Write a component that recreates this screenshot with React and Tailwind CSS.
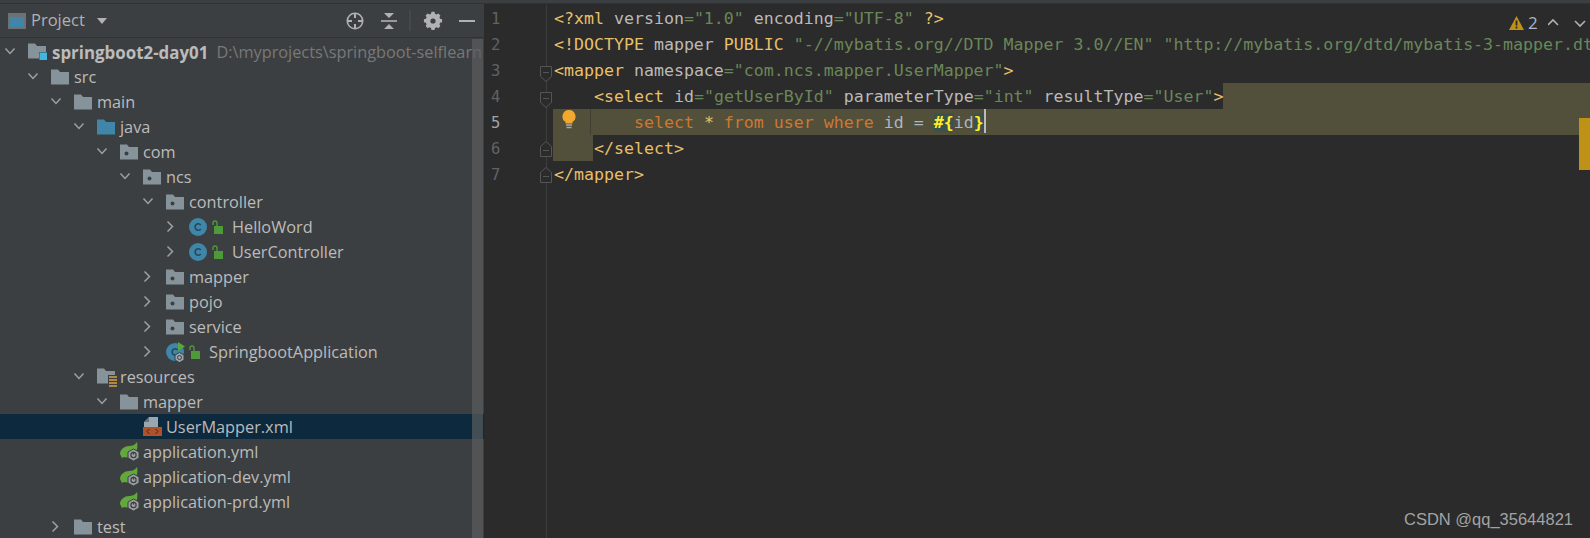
const treeRows = [
  { level: 0, open: true, icon: "module", name: "springboot2-day01", bold: true, path: "D:\\myprojects\\springboot-selflearn" },
  { level: 1, open: true, icon: "folder", name: "src" },
  { level: 2, open: true, icon: "folder", name: "main" },
  { level: 3, open: true, icon: "source", name: "java" },
  { level: 4, open: true, icon: "package", name: "com" },
  { level: 5, open: true, icon: "package", name: "ncs" },
  { level: 6, open: true, icon: "package", name: "controller" },
  { level: 7, open: false, icon: "class", name: "HelloWord" },
  { level: 7, open: false, icon: "class", name: "UserController" },
  { level: 6, open: false, icon: "package", name: "mapper" },
  { level: 6, open: false, icon: "package", name: "pojo" },
  { level: 6, open: false, icon: "package", name: "service" },
  { level: 6, open: false, icon: "boot", name: "SpringbootApplication" },
  { level: 3, open: true, icon: "resources", name: "resources" },
  { level: 4, open: true, icon: "folder", name: "mapper" },
  { level: 5, icon: "xml", name: "UserMapper.xml", selected: true },
  { level: 4, icon: "spring", name: "application.yml" },
  { level: 4, icon: "spring", name: "application-dev.yml" },
  { level: 4, icon: "spring", name: "application-prd.yml" },
  { level: 2, open: false, icon: "folder", name: "test" },
];

const FOLDER = "M0 1.5h7l2 2.5h9v12.5H0z";

const Chevron = ({ open }) => (
  <svg width="20" height="25" viewBox="0 0 20 25" fill="none" stroke="#9da0a2" strokeWidth="1.5" className="shrink-0">
    {open ? <path d="M5.5 9.5l4.500 5 4.500-5" /> : <path d="M6.500 7.500l5 5-5 5" />}
  </svg>
);

const Lock = () => (
  <svg width="11" height="14" viewBox="0 0 11 14" className="shrink-0">
    <path d="M1 5V3a2 2 0 0 1 4 0v3" fill="none" stroke="#4f9a38" strokeWidth="1.4" />
    <rect x="2" y="6" width="9" height="8" fill="#4f9a38" />
  </svg>
);

const TreeIcon = ({ type }) => {
  if (type === "class") {
    return (
      <div className="flex items-center shrink-0">
        <svg width="18" height="18" viewBox="0 0 18 18">
          <circle cx="9" cy="9" r="9" fill="#3f86a8" />
          <path d="M11.800 7a3.200 3.200 0 1 0 0 4" fill="none" stroke="#24495c" strokeWidth="1.6" />
        </svg>
        <div className="ml-[5px] mr-[4px]"><Lock /></div>
      </div>
    );
  }
  if (type === "boot") {
    return (
      <div className="flex items-center shrink-0">
        <svg width="20" height="22" viewBox="0 0 20 22">
          <circle cx="9" cy="11" r="9" fill="#3f86a8" />
          <path d="M11.800 9a3.200 3.200 0 1 0 0 4" fill="none" stroke="#24495c" strokeWidth="1.6" />
          <path d="M12 1l7 4.500-7 4.500z" fill="#59a83b" />
          <path d="M13.500 11.500l4.500 2.500v5l-4.500 2.500-4.500-2.500v-5z" fill="#9aa7b0" stroke="#3c3f41" />
          <circle cx="13.500" cy="16.500" r="2" fill="none" stroke="#3c3f41" />
        </svg>
        <div className="ml-[3px] mr-[4px]"><Lock /></div>
      </div>
    );
  }
  if (type === "xml") {
    return (
      <svg width="19" height="20" viewBox="0 0 19 20" className="shrink-0 mr-[-1px]">
        <path d="M6 0h9v10H1V5z" fill="#9aa7b0" />
        <path d="M6 0v5H1z" fill="#3c3f41" opacity="0.5" />
        <rect y="10" width="19" height="9" fill="#b0512a" />
        <path d="M6.500 12l-2.500 2.500 2.500 2.500M12.500 12l2.500 2.500-2.500 2.500" fill="none" stroke="#2a2b2c" strokeWidth="1" />
      </svg>
    );
  }
  if (type === "spring") {
    return (
      <svg width="20" height="20" viewBox="0 0 20 20" className="shrink-0 mr-[-2px]">
        <path d="M0 12c0-5 5-8 9-8 3 0 6-1 8-4 1 5 0 10-3 13-3 2-7 3-10 2L2 16z" fill="#62a83d" />
        <path d="M13.500 7l5.500 3v6l-5.500 3L8 16v-6z" fill="#9da0a2" stroke="#3c3f41" />
        <circle cx="13.500" cy="13" r="2.600" fill="none" stroke="#3c3f41" strokeWidth="1.2" />
        <path d="M13.500 9.600v3" stroke="#3c3f41" strokeWidth="1.2" />
      </svg>
    );
  }
  if (type === "module") {
    return (
      <svg width="19" height="20" viewBox="0 0 19 20" className="shrink-0">
        <path d={FOLDER} fill="#87939a" />
        <rect x="11" y="10" width="8" height="8" fill="#3c3f41" />
        <rect x="11.500" y="10.500" width="7.500" height="7.500" fill="#40b6e0" />
      </svg>
    );
  }
  if (type === "resources") {
    return (
      <svg width="20" height="20" viewBox="0 0 20 20" className="shrink-0 mr-[-2px]">
        <path d={FOLDER} fill="#87939a" />
        <rect x="11" y="8" width="9" height="12" fill="#3c3f41" />
        <path d="M12 10h8M12 13h8M12 16h8M12 19h8" stroke="#d9a343" strokeWidth="1.4" />
      </svg>
    );
  }
  return (
    <svg width="18" height="18" viewBox="0 0 18 18" className="shrink-0">
      <path d={FOLDER} fill={type === "source" ? "#3f86a8" : "#87939a"} />
      {type === "package" && <circle cx="6.500" cy="10.500" r="2" fill="#3c3f41" />}
    </svg>
  );
};

const TreeRow = ({ row }) => (
  <div
    className={`flex items-center h-[25px] whitespace-nowrap ${row.selected ? "bg-[#0d293e]" : ""}`}
    style={{ paddingLeft: row.level * 23 }}
  >
    {row.open === undefined ? <div className="w-[20px] shrink-0" /> : <Chevron open={row.open} />}
    <div className="w-[8px] shrink-0" />
    <TreeIcon type={row.icon} />
    <span className={`ml-[5px] pt-[2px] text-[#bbbbbb] ${row.bold ? "font-bold text-[16.900px]" : "text-[16.300px]"}`}>{row.name}</span>
    {row.path && <span className="ml-[8px] pt-[2px] text-[16.300px] text-[#787878]">{row.path}</span>}
  </div>
);

const HeaderIcons = () => (
  <svg width="140" height="33" viewBox="0 0 140 33" className="shrink-0">
    <g fill="none" stroke="#afb1b3">
      <circle cx="17" cy="17" r="7.700" strokeWidth="1.6" />
      <path d="M17 9v5M17 20v5M9 17h5M20 17h5" strokeWidth="2" />
      <path d="M43 17h16" strokeWidth="1.6" />
    </g>
    <path d="M46 9h10l-5 5zM46 25h10l-5-5z" fill="#afb1b3" />
    <path d="M72 6v21" stroke="#515151" />
    <path
      d="M93.500 9.200h3l.5 2 1.500.7 1.800-1 2.100 2.100-1 1.800.7 1.500 2 .5v3l-2 .5-.7 1.500 1 1.800-2.100 2.100-1.800-1-1.500.7-.5 2h-3l-.5-2-1.500-.7-1.800 1-2.100-2.100 1-1.800-.7-1.500-2-.5v-3l2-.5.7-1.500-1-1.800 2.100-2.100 1.800 1 1.500-.7z"
      fill="#afb1b3"
      transform="translate(0 -1.500)"
    />
    <circle cx="95" cy="17" r="2.600" fill="#3c3f41" />
    <path d="M121 17h16" stroke="#afb1b3" strokeWidth="2" />
  </svg>
);

const ProjectPanel = () => (
  <div className="relative w-[484px] h-full shrink-0 bg-[#3c3f41] overflow-hidden font-['Open_Sans',sans-serif]">
    <div className="flex items-center h-[34px] border-b border-[#323232] pl-[8px] pr-[6px]">
      <svg width="18" height="16" viewBox="0 0 18 16" className="shrink-0">
        <rect width="18" height="16" fill="#6e7072" />
        <rect x="2" y="4" width="14" height="10" fill="#3f86a8" />
      </svg>
      <span className="ml-[5px] text-[16.500px] text-[#afb1b3]">Project</span>
      <svg width="10" height="6" viewBox="0 0 10 6" className="ml-[12px] shrink-0">
        <path d="M0 0h10l-5 6z" fill="#afb1b3" />
      </svg>
      <div className="flex-1" />
      <HeaderIcons />
    </div>
    <div className="pt-px">
      {treeRows.map((row, i) => (
        <TreeRow key={i} row={row} />
      ))}
    </div>
    <div className="absolute left-[472px] top-[35px] bottom-0 w-[11px] bg-[#5a5c5e]/70" />
  </div>
);

const T = ({ c, children }) => <span className={c}>{children}</span>;

const tag = "text-[#e8bf6a]";
const attr = "text-[#bababa]";
const str = "text-[#6a8759]";
const kw = "text-[#cc7832]";

const lines = [
  <>
    <T c={tag}>&lt;?xml </T><T c={attr}>version</T><T c={str}>="1.0" </T><T c={attr}>encoding</T><T c={str}>="UTF-8" </T><T c={tag}>?&gt;</T>
  </>,
  <>
    <T c={tag}>&lt;!DOCTYPE </T><T c={attr}>mapper </T><T c={tag}>PUBLIC </T>
    <T c={str}>"-//mybatis.org//DTD Mapper 3.0//EN" "http://mybatis.org/dtd/mybatis-3-mapper.dtd"</T><T c={tag}>&gt;</T>
  </>,
  <>
    <T c={tag}>&lt;mapper </T><T c={attr}>namespace</T><T c={str}>="com.ncs.mapper.UserMapper"</T><T c={tag}>&gt;</T>
  </>,
];

const EditorLine = ({ children }) => (
  <div className="h-[26px] leading-[28px] ml-[6px] pl-px whitespace-pre">{children}</div>
);

const FoldMark = ({ top, up }) => (
  <svg width="12" height="16" viewBox="0 0 12 16" className="absolute left-[-6px]" style={{ top }}>
    <path
      d={up ? "M.5 15.500v-10l5.500-5 5.500 5v10z" : "M.5 .5h11v10l-5.500 5-5.500-5z"}
      fill="#2b2b2b"
      stroke="#555555"
    />
    <path d={up ? "M3 9.500h6" : "M3 6.500h6"} stroke="#555555" />
  </svg>
);

const Editor = () => (
  <div className="relative flex-1 h-full bg-[#2b2b2b] overflow-hidden font-['DejaVu_Sans_Mono',monospace] text-[16.600px]">
    <div className="flex h-full pt-px">
      <div className="w-[62px] shrink-0">
        {[1, 2, 3, 4, 5, 6, 7].map((n) => (
          <div key={n} className={`h-[26px] leading-[28px] pl-[7px] text-[15.500px] ${n === 5 ? "text-[#a4a3a3]" : "text-[#606366]"}`}>
            {n}
          </div>
        ))}
      </div>
      <div className="relative w-px shrink-0 bg-[#3d3d3d]">
        <FoldMark top={61} />
        <FoldMark top={87} />
        <FoldMark top={136} up />
        <FoldMark top={162} up />
      </div>
      <div className="flex-1 min-w-0">
        {lines.map((line, i) => (
          <EditorLine key={i}>{line}</EditorLine>
        ))}
        <div className="h-[26px] leading-[28px] ml-[6px] whitespace-pre bg-[#52503a]">
          <span className="inline-block h-[26px] pl-[41px] bg-[#2b2b2b]">
            <T c={tag}>&lt;select </T><T c={attr}>id</T><T c={str}>="getUserById" </T><T c={attr}>parameterType</T><T c={str}>="int" </T><T c={attr}>resultType</T><T c={str}>="User"</T><T c={tag}>&gt;</T>
          </span>
        </div>
        <div className="relative h-[26px] leading-[28px] ml-[6px] pl-px whitespace-pre bg-[#52503a]">
          {"        "}
          <T c={kw}>select </T><T c="text-[#e8bf6a]">* </T><T c={kw}>from user where </T>
          <T c="text-[#a9b7c6]">id = </T>
          <span className="bg-[#3b514d] font-bold text-[#ffef28]">{"#{"}</span>
          <T c="text-[#a9b7c6]">id</T>
          <span className="bg-[#3b514d] font-bold text-[#ffef28]">{"}"}</span>
          <span className="absolute top-0 w-[2px] h-[24px] bg-[#bbbbbb]" />
          <span className="absolute left-[37px] top-0 w-px h-full bg-[#3f3f35]" />
          <svg width="14" height="19" viewBox="0 0 14 19" className="absolute left-[9px] top-[1px]">
            <path d="M7 0a6.500 6.500 0 0 1 3.500 12v1.500h-7V12A6.500 6.500 0 0 1 7 0z" fill="#f2a82c" />
            <path d="M4 15h6M4.500 17.500h5" stroke="#a9a9a9" strokeWidth="1.600" />
          </svg>
        </div>
        <div className="flex h-[26px] leading-[28px] ml-[6px] whitespace-pre">
          <div className="w-[40px] shrink-0 bg-[#52503a]" />
          <div className="pl-px"><T c={tag}>&lt;/select&gt;</T></div>
        </div>
        <EditorLine><T c={tag}>&lt;/mapper&gt;</T></EditorLine>
      </div>
    </div>

    <div className="absolute right-0 top-[11px] flex items-center">
      <svg width="15" height="14" viewBox="0 0 15 14">
        <path d="M7.500 0l7.500 14H0z" fill="#be9117" />
        <path d="M7.500 4.500v5M7.500 10.500v2" stroke="#2b2b2b" strokeWidth="1.800" />
      </svg>
      <span className="ml-[4px] w-[16px] text-[17px] leading-[16px] text-[#a9b7c6] font-['Open_Sans',sans-serif]">2</span>
      <svg width="42" height="10" viewBox="0 0 42 10" fill="none" stroke="#afb1b3" strokeWidth="1.600" className="ml-[4px]">
        <path d="M0 7l5-5 5 5M27 3l5 5 5-5" />
      </svg>
    </div>
    <div className="absolute right-0 top-[114px] w-[11px] h-[52px] bg-[#be9117]" />
  </div>
);

export default function App() {
  return (
    <div className="relative w-[1590px] h-[538px] flex flex-col overflow-hidden bg-[#2b2b2b]">
      <div className="h-[4px] shrink-0 bg-[#3c3f41] border-b border-[#323232]" />
      <div className="flex flex-1 min-h-0">
        <ProjectPanel />
        <Editor />
      </div>
      <div className="absolute right-[17px] bottom-[6px] font-['Liberation_Sans',sans-serif] text-[16.500px] text-[#a3a3a3]">
        CSDN @qq_35644821
      </div>
    </div>
  );
}
